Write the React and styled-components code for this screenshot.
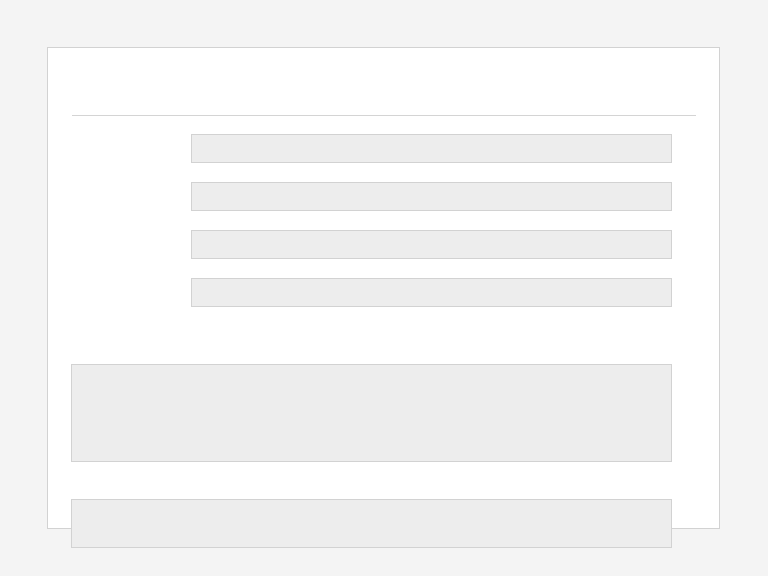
import React from "react";
import styled, { createGlobalStyle } from "styled-components";

const GlobalStyle = createGlobalStyle`
  html, body {
    margin: 0;
    padding: 0;
    min-height: 100vh;
    background: #f4f4f4;
    font-family: "Liberation Sans", Arial, sans-serif;
  }
  #root {
    min-height: 100vh;
    overflow: visible;
  }
`;

const fields = ["name", "email", "phone", "subject"];

const App = () => {
  return (
    <>
      <GlobalStyle />
      <Page>
        <Card>
          <Header />
          <Form>
            {fields.map((f) => (
              <Row key={f}>
                <Label />
                <Input aria-label={f} />
              </Row>
            ))}
          </Form>
          <TextBlock />
          <Footer />
        </Card>
      </Page>
    </>
  );
};

export default App;

const Page = styled.div`
  box-sizing: border-box;
  min-height: 576px;
  padding: 47px 0 0 47px;
`;

const Card = styled.div`
  box-sizing: border-box;
  width: 673px;
  height: 482px;
  padding: 0 23px;
  background: #fff;
  border: 1px solid #d2d2d2;
`;

const Header = styled.div`
  height: 67px;
  margin-left: 1px;
  border-bottom: 1px solid #d4d4d4;
`;

const Form = styled.div`
  width: 601px;
  margin-top: 18px;
  display: flex;
  flex-direction: column;
  gap: 19px;
`;

const Row = styled.div`
  display: grid;
  grid-template-columns: 120px 1fr;
`;

const Label = styled.div``;

const Input = styled.div`
  box-sizing: border-box;
  height: 29px;
  background: #ededed;
  border: 1px solid #d2d2d2;
`;

const TextBlock = styled.div`
  box-sizing: border-box;
  width: 601px;
  height: 98px;
  margin-top: 57px;
  background: #ededed;
  border: 1px solid #d2d2d2;
`;

const Footer = styled.div`
  box-sizing: border-box;
  width: 601px;
  height: 49px;
  margin-top: 37px;
  background: #ededed;
  border: 1px solid #d2d2d2;
`;
